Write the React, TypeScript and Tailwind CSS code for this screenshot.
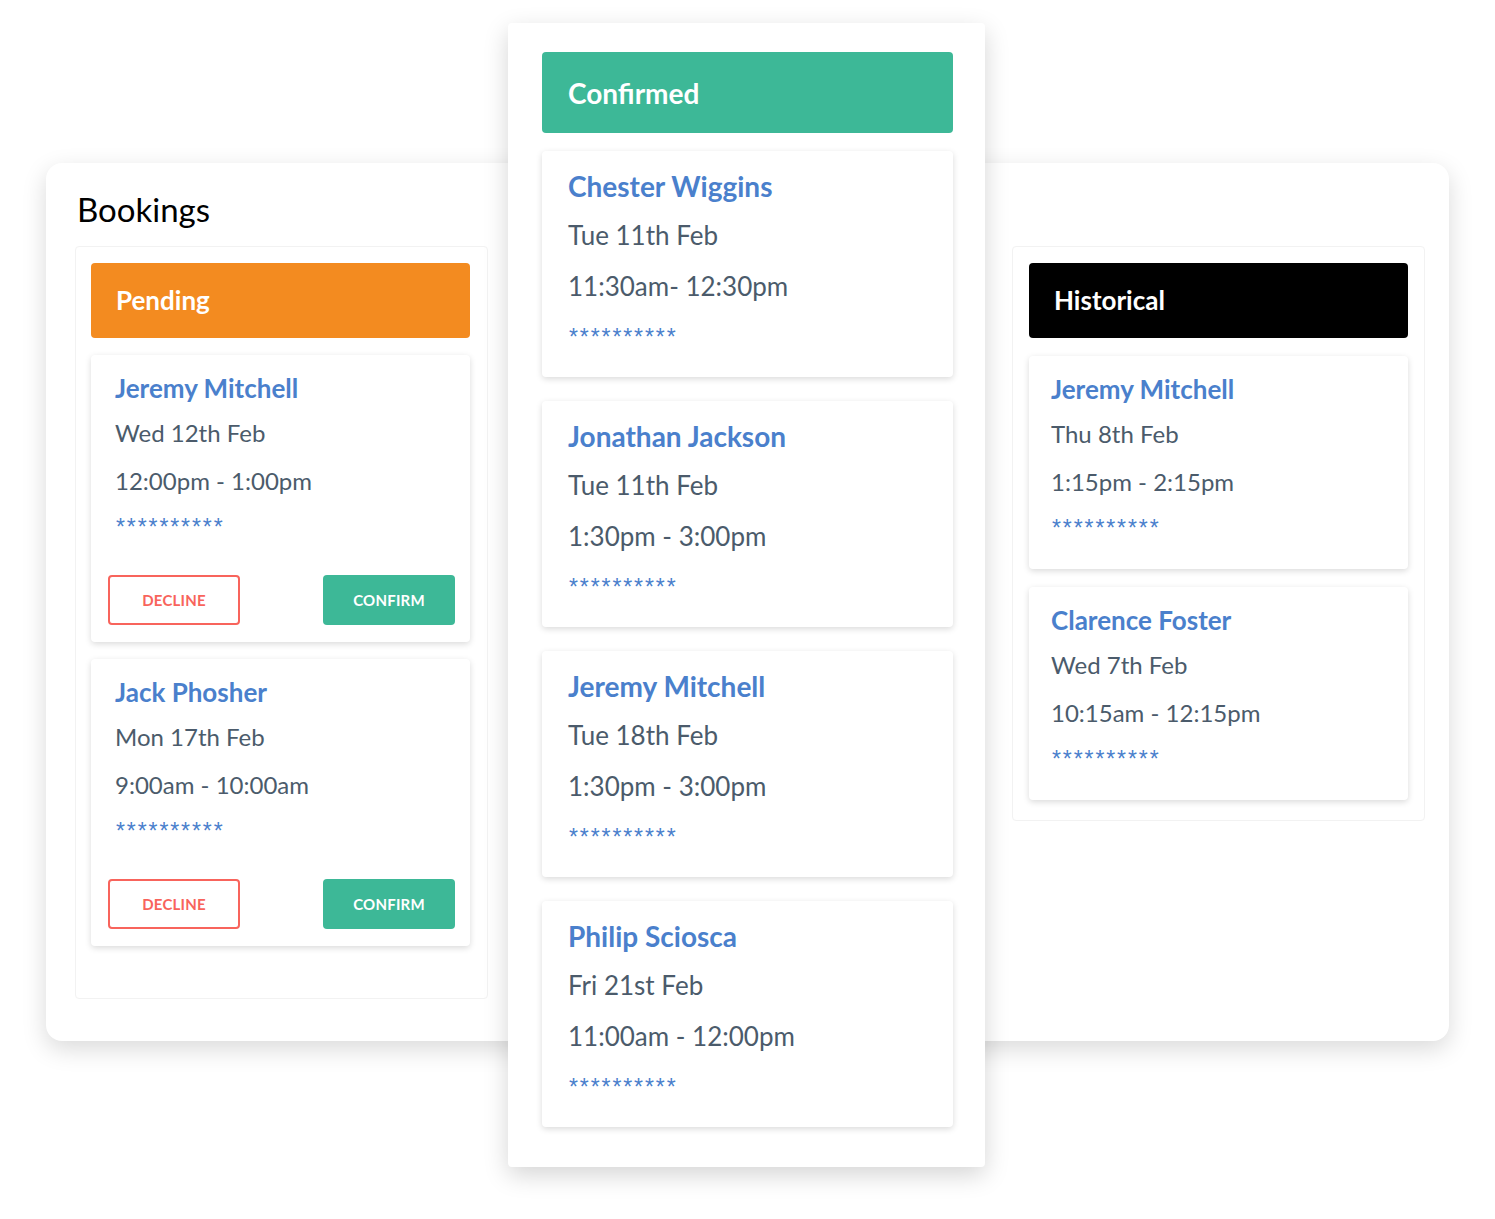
const font = { fontFamily: 'Lato, "Noto Sans", sans-serif' }
const starFont = { fontFamily: '"Liberation Sans", Arial, sans-serif' }

type Booking = { name: string; date: string; time: string }

const pending: Booking[] = [
  { name: 'Jeremy Mitchell', date: 'Wed 12th Feb', time: '12:00pm - 1:00pm' },
  { name: 'Jack Phosher', date: 'Mon 17th Feb', time: '9:00am - 10:00am' },
]

const confirmed: Booking[] = [
  { name: 'Chester Wiggins', date: 'Tue 11th Feb', time: '11:30am- 12:30pm' },
  { name: 'Jonathan Jackson', date: 'Tue 11th Feb', time: '1:30pm - 3:00pm' },
  { name: 'Jeremy Mitchell', date: 'Tue 18th Feb', time: '1:30pm - 3:00pm' },
  { name: 'Philip Sciosca', date: 'Fri 21st Feb', time: '11:00am - 12:00pm' },
]

const historical: Booking[] = [
  { name: 'Jeremy Mitchell', date: 'Thu 8th Feb', time: '1:15pm - 2:15pm' },
  { name: 'Clarence Foster', date: 'Wed 7th Feb', time: '10:15am - 12:15pm' },
]

// masked reference number
function Stars() {
  return (
    <div
      className="h-[20px] pt-[6px] text-[23px] leading-[20px] tracking-[1.9px] text-[#4a80cc]"
      style={starFont}
    >
      **********
    </div>
  )
}

function SmallCard({ b, actions }: { b: Booking; actions?: boolean }) {
  return (
    <div className={`rounded bg-white shadow-[0_2px_6px_rgba(0,0,0,0.15)] ${actions ? 'px-6' : 'px-[22px]'}`}>
      <div className="pt-[17px] text-[26px] font-bold leading-[32px] text-[#4a80cc]">{b.name}</div>
      <div className="mt-[13px] text-[24px] leading-[32px] text-[#4b5b6b]">{b.date}</div>
      <div className="mt-[16px] text-[24px] leading-[32px] text-[#4b5b6b]">{b.time}</div>
      <div className="mt-[14px] pl-[1px]">
        <Stars />
      </div>
      {actions ? (
        <div className="-ml-[7px] -mr-[9px] mt-[44px] flex justify-between pb-[17px]">
          <button className="h-[50px] w-[132px] rounded border-2 border-[#f8645c] bg-white text-[15px] font-bold tracking-[0.2px] text-[#f8645c]">
            DECLINE
          </button>
          <button className="h-[50px] w-[132px] rounded bg-[#3db897] text-[15px] font-bold tracking-[0.2px] text-white">
            CONFIRM
          </button>
        </div>
      ) : (
        <div className="h-[37px]" />
      )}
    </div>
  )
}

function BigCard({ b }: { b: Booking }) {
  return (
    <div className="h-[226px] rounded bg-white px-[26px] shadow-[0_2px_6px_rgba(0,0,0,0.15)]">
      <div className="pt-[17px] text-[28px] font-bold leading-[36px] text-[#4a80cc]">{b.name}</div>
      <div className="mt-[13px] text-[26px] leading-[36px] text-[#4b5b6b]">{b.date}</div>
      <div className="mt-[15px] text-[26px] leading-[36px] text-[#4b5b6b]">{b.time}</div>
      <div className="mt-[17px] pl-[1px]">
        <Stars />
      </div>
    </div>
  )
}

function Header({ label, color, tall }: { label: string; color: string; tall?: boolean }) {
  return (
    <div
      className={`flex items-center rounded font-bold text-white ${color} ${
        tall ? 'h-[81px] pl-[26px] text-[28px]' : 'h-[75px] pl-[25px] text-[26px]'
      }`}
    >
      {label}
    </div>
  )
}

export default function App() {
  return (
    <div className="relative h-[1219px] w-[1495px] bg-white pt-[163px]" style={font}>
      <div className="ml-[46px] flex h-[878px] w-[1403px] justify-between rounded-2xl bg-white pl-[29px] pr-[24px] shadow-[0_8px_24px_rgba(0,0,0,0.15)]">
        <div className="w-[413px]">
          <div className="ml-[2px] pt-[26px] text-[33px] leading-[40px] text-black">Bookings</div>
          <div className="mt-[17px] flex h-[753px] flex-col gap-[17px] rounded border border-[#f2f2f2] pl-[15px] pr-[17px] pt-[16px]">
            <Header label="Pending" color="bg-[#f38b20]" />
            {pending.map((b) => (
              <SmallCard key={b.name} b={b} actions />
            ))}
          </div>
        </div>
        <div className="w-[413px] pt-[83px]">
          <div className="flex h-[575px] flex-col gap-[18px] rounded border border-[#f2f2f2] px-[16px] pt-[16px]">
            <Header label="Historical" color="bg-black" />
            {historical.map((b) => (
              <SmallCard key={b.name} b={b} />
            ))}
          </div>
        </div>
      </div>

      <div className="absolute left-[508px] top-[23px] flex h-[1144px] w-[477px] flex-col gap-[24px] rounded bg-white pl-[34px] pr-[32px] pt-[29px] shadow-[0_8px_24px_rgba(0,0,0,0.17)]">
        <div className="-mb-[6px]">
          <Header label="Confirmed" color="bg-[#3db897]" tall />
        </div>
        {confirmed.map((b) => (
          <BigCard key={b.name + b.date} b={b} />
        ))}
      </div>
    </div>
  )
}
